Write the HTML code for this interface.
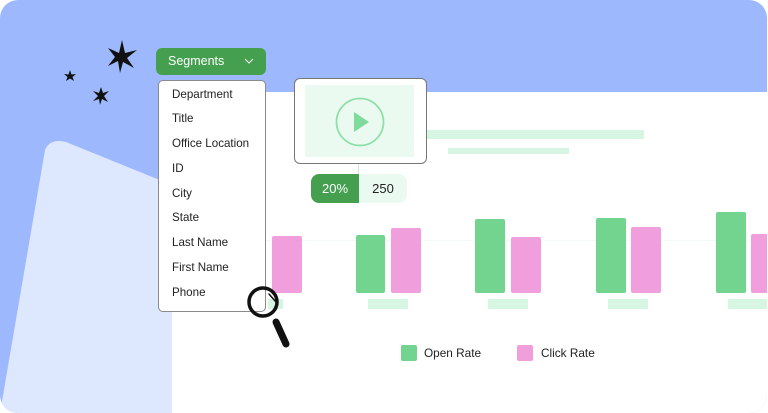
<!DOCTYPE html>
<html><head><meta charset="utf-8"><style>
*{margin:0;padding:0;box-sizing:border-box}
body{width:768px;height:413px;background:#fff;position:relative;overflow:hidden;font-family:"Liberation Sans",sans-serif}
.card{position:absolute;left:0;top:0;width:767px;height:413px;background:#9db8fd;border-radius:18px;overflow:hidden}
.abs{position:absolute}
.panel{left:172px;top:92px;width:596px;height:321px;background:#fff;border-bottom-right-radius:16px}
.btn{left:156px;top:48px;width:110px;height:27px;background:#44a04f;border-radius:6px;color:#fff;font-size:12.5px;line-height:27px;padding-left:12px}
.menu{left:158px;top:80px;width:108px;height:232px;background:#fff;border:1px solid #8a8a8a;border-radius:5px}
.menu div{position:absolute;left:13px;font-size:11.6px;color:#222}
.bar{position:absolute;border-radius:2px}
.g{background:#72d48f}.p{background:#f09fdc}
.lbl{position:absolute;top:299px;height:10px;background:#d6f5e3}
</style></head><body>
<div class="card">
<svg class="abs" style="left:0;top:0" width="768" height="413"><path d="M66 142 Q50 138 45 150 L0 413 L172 413 L172 185 Z" fill="#dde7fe"/></svg>
<div class="abs panel"></div>
<div class="abs" style="left:172px;top:240px;width:596px;height:1px;background:#f3f9f5"></div>
<div class="abs" style="left:426px;top:130px;width:218px;height:9px;background:#d6f5e3"></div>
<div class="abs" style="left:448px;top:148px;width:121px;height:6px;background:#d6f5e3"></div>
<div class="bar p" style="left:272px;top:236px;width:30px;height:57px"></div>
<div class="bar g" style="left:356px;top:235px;width:29px;height:58px"></div>
<div class="bar p" style="left:391px;top:228px;width:30px;height:65px"></div>
<div class="bar g" style="left:475px;top:219px;width:30px;height:74px"></div>
<div class="bar p" style="left:511px;top:237px;width:30px;height:56px"></div>
<div class="bar g" style="left:596px;top:218px;width:30px;height:75px"></div>
<div class="bar p" style="left:631px;top:227px;width:30px;height:66px"></div>
<div class="bar g" style="left:716px;top:212px;width:30px;height:81px"></div>
<div class="bar p" style="left:751px;top:234px;width:20px;height:59px"></div>
<div class="lbl" style="left:268px;width:15px"></div>
<div class="lbl" style="left:368px;width:40px"></div>
<div class="lbl" style="left:488px;width:40px"></div>
<div class="lbl" style="left:608px;width:40px"></div>
<div class="lbl" style="left:728px;width:40px"></div>
<div class="abs" style="left:401px;top:345px;width:16px;height:16px;background:#72d48f;border-radius:2px"></div>
<div class="abs" style="left:424px;top:345px;font-size:11.8px;line-height:16px;color:#222">Open Rate</div>
<div class="abs" style="left:517px;top:345px;width:16px;height:16px;background:#f09fdc;border-radius:2px"></div>
<div class="abs" style="left:541px;top:345px;font-size:11.8px;line-height:16px;color:#222">Click Rate</div>
<div class="abs" style="left:358px;top:163px;width:1px;height:12px;background:#cfe9d8"></div>
<div class="abs" style="left:294px;top:78px;width:133px;height:86px;background:#fff;border:1px solid #777;border-radius:6px"></div>
<div class="abs" style="left:305px;top:85px;width:109px;height:72px;background:#ebfaf1"></div>
<svg class="abs" style="left:334px;top:96px" width="52" height="52"><circle cx="26" cy="26" r="23.5" fill="none" stroke="#8ee0a8" stroke-width="1.8"/><path d="M20 16 L35 26 L20 36 Z" fill="#7edb9c"/></svg>
<div class="abs" style="left:311px;top:174px;width:96px;height:29px;background:#ebfaf1;border-radius:8px"></div>
<div class="abs" style="left:311px;top:174px;width:48px;height:29px;background:#44a04f;border-radius:8px 0 0 8px;color:#fff;font-size:13px;line-height:29px;text-align:center">20%</div>
<div class="abs" style="left:359px;top:174px;width:48px;height:29px;color:#222;font-size:13px;line-height:29px;text-align:center">250</div>
<div class="abs btn">Segments<svg class="abs" style="left:88px;top:10px" width="10" height="7"><path d="M1 1 L5 5 L9 1" fill="none" stroke="#fff" stroke-width="1"/></svg></div>
<div class="abs menu">
<div style="top:7px">Department</div><div style="top:31px">Title</div><div style="top:56px">Office Location</div><div style="top:81px">ID</div><div style="top:106px">City</div><div style="top:130px">State</div><div style="top:155px">Last Name</div><div style="top:180px">First Name</div><div style="top:205px">Phone</div>
</div>
<svg class="abs" style="left:0;top:0" width="768" height="413">
<g fill="#111"><path d="M122 40 L125 53 L137 50 L127 58 L134 68 L123 62 L120 73 L118 61 L108 66 L115 57 L108 48 L119 53 Z"/>
<path d="M70 70 L71.5 74.5 L76 74 L72.5 77 L74 81 L70 78.5 L66 81 L67.5 77 L64 74 L68.5 74.5 Z"/>
<path d="M101 87 L103 93 L109 91 L104 96 L108 102 L102 99 L100 105 L99 99 L93 101 L98 96 L93 91 L99 93 Z"/></g>
<g stroke="#111" stroke-linecap="round">
<circle cx="263" cy="302" r="14" fill="none" stroke-width="3.5"/>
<path d="M276 322 L286 344" stroke-width="7"/>
<path d="M269 294 L276 302" stroke-width="1.5"/>
</g></svg>
</div>
</body></html>
